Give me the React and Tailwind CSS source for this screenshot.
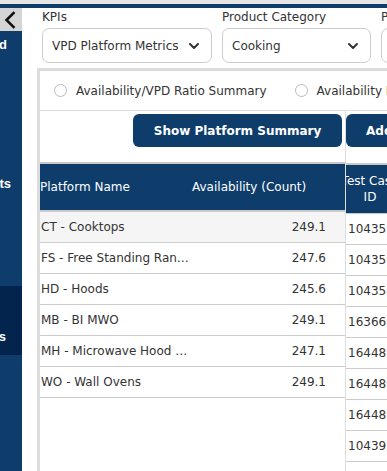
import React from "react";

const NAVY = "bg-[#0e3d6c]";

function ChevronDown() {
  return (
    <svg width="16" height="16" viewBox="0 0 24 24" fill="none" stroke="#333" strokeWidth="3" strokeLinecap="round" strokeLinejoin="round">
      <path d="m6 9 6 6 6-6" />
    </svg>
  );
}

function Select({ label, value, width }) {
  return (
    <div className={`flex flex-col shrink-0 ${width}`}>
      <div className="mt-[2px] leading-[14px] text-[12px] text-[#333] whitespace-nowrap">{label}</div>
      <div className="mt-[4px] h-[35px] rounded-[7px] border border-[#cccccc] bg-white flex items-center justify-between pl-[9px] pr-[9px]">
        <span className="whitespace-nowrap text-[12px] text-[#333]">{value}</span>
        <ChevronDown />
      </div>
    </div>
  );
}

function Radio({ label }) {
  return (
    <div className="flex items-center shrink-0">
      <span className="w-[13px] h-[13px] rounded-full border border-[#bbbbbb] bg-white" />
      <span className="ml-[9px] whitespace-nowrap text-[12px] text-[#333]">{label}</span>
    </div>
  );
}

const platforms = [
  ["CT - Cooktops", "249.1"],
  ["FS - Free Standing Range", "247.6"],
  ["HD - Hoods", "245.6"],
  ["MB - BI MWO", "249.1"],
  ["MH - Microwave Hood Combo", "247.1"],
  ["WO - Wall Ovens", "249.1"],
];

const testIds = ["104357", "104356", "104358", "163660", "164489", "164489", "164489", "104392"];

export default function App() {
  return (
    <div className="w-[387px] h-[471px] overflow-hidden bg-white flex flex-col font-['DejaVu_Sans',sans-serif] text-[12px] text-[#333]">
      <div className="h-[4px] shrink-0 bg-[#e6e6e6]" />
      <div className={`h-[4px] shrink-0 ${NAVY}`} />
      <div className="flex flex-1 min-h-0">
        <aside className={`w-[22px] shrink-0 flex flex-col overflow-hidden ${NAVY} font-['Liberation_Sans',sans-serif] font-bold text-[13px] text-white`}>
          <div className="h-[23px] shrink-0 bg-[#d5d5d5] flex items-center">
            <svg width="22" height="23" viewBox="0 0 22 23" fill="none" stroke="#111" strokeWidth="2.6" strokeLinecap="square">
              <path d="M13.5 5 L6.5 12 L13.5 19" />
            </svg>
          </div>
          <div className="h-[26px] shrink-0 flex items-center justify-end">
            <span className="shrink-0 mr-[15px] whitespace-nowrap leading-[15px]">Dashboard</span>
          </div>
          <div className="h-[113px] shrink-0" />
          <div className="h-[26px] shrink-0 flex items-center justify-end">
            <span className="shrink-0 mr-[11px] whitespace-nowrap leading-[15px]">Reports</span>
          </div>
          <div className="h-[90px] shrink-0" />
          <div className="h-[69px] shrink-0 bg-[#02244d] flex items-end justify-end pb-[11px]">
            <span className="shrink-0 mr-[16px] whitespace-nowrap leading-[15px]">Test Cases</span>
          </div>
          <div className="flex-1" />
        </aside>

        <main className="flex-1 min-w-0 overflow-hidden flex flex-col">
          <div className="flex gap-[10px] pl-[20px] shrink-0">
            <Select label="KPIs" value="VPD Platform Metrics" width="w-[170px]" />
            <Select label="Product Category" value="Cooking" width="w-[149px]" />
            <Select label="Platform" value="All" width="w-[149px]" />
          </div>

          <div className="mt-[5px] ml-[15px] flex-1 min-h-0 flex flex-col border-t-[3px] border-l-[3px] border-[#dcdcdc]">
            <div className="h-[40px] shrink-0 border-b border-[#dddddd] flex items-center pl-[14px] gap-[28px]">
              <Radio label="Availability/VPD Ratio Summary" />
              <Radio label="Availability Percentage" />
            </div>

            <div className="flex flex-1 min-h-0">
              <div className="w-[306px] shrink-0 border-r border-[#dddddd] flex flex-col">
                <div className="pt-[3px] flex justify-end pr-[3px]">
                  <button className={`w-[209px] h-[33px] rounded-[6px] ${NAVY} text-white font-bold text-[12px] whitespace-nowrap`}>
                    Show Platform Summary
                  </button>
                </div>
                <div className="mt-[15px] border-t-2 border-[#c9c9c9]">
                  <div className={`h-[46px] grid grid-cols-[152px_1fr] items-center ${NAVY} text-white border-b-2 border-[#c9c9c9] box-content`}>
                    <div className="whitespace-nowrap">Platform Name</div>
                    <div className="whitespace-nowrap">Availability (Count)</div>
                  </div>
                  {platforms.map(([name, val], i) => (
                    <div
                      key={name}
                      className={`h-[31px] grid grid-cols-[152px_1fr] items-center border-b border-[#cccccc] ${i === 0 ? "bg-[#f5f5f5]" : "bg-white"}`}
                    >
                      <div className="pl-[1px] pr-[3px] truncate">{name}</div>
                      <div className="text-right pr-[19px]">{val}</div>
                    </div>
                  ))}
                </div>
              </div>

              <div className="flex-1 min-w-0 overflow-hidden flex flex-col">
                <div className="pt-[3px] flex">
                  <button className={`shrink-0 w-[160px] h-[33px] rounded-[6px] ${NAVY} text-white font-bold text-[12px] whitespace-nowrap text-left pl-[20px]`}>
                    Add Test Cases
                  </button>
                </div>
                <div className="mt-[16px] border-t-2 border-[#c9c9c9]">
                  <div className={`h-[48px] flex items-center ${NAVY} text-white border-b border-[#c9c9c9] box-content`}>
                    <div className="shrink-0 -ml-[7px] w-[62px] text-center leading-[16px]">Test Case ID</div>
                  </div>
                  {testIds.map((id, i) => (
                    <div key={i} className="h-[31px] flex items-center border-b border-[#cccccc] pl-[2px] whitespace-nowrap">
                      {id}
                    </div>
                  ))}
                </div>
              </div>
            </div>
          </div>
        </main>
      </div>
    </div>
  );
}
